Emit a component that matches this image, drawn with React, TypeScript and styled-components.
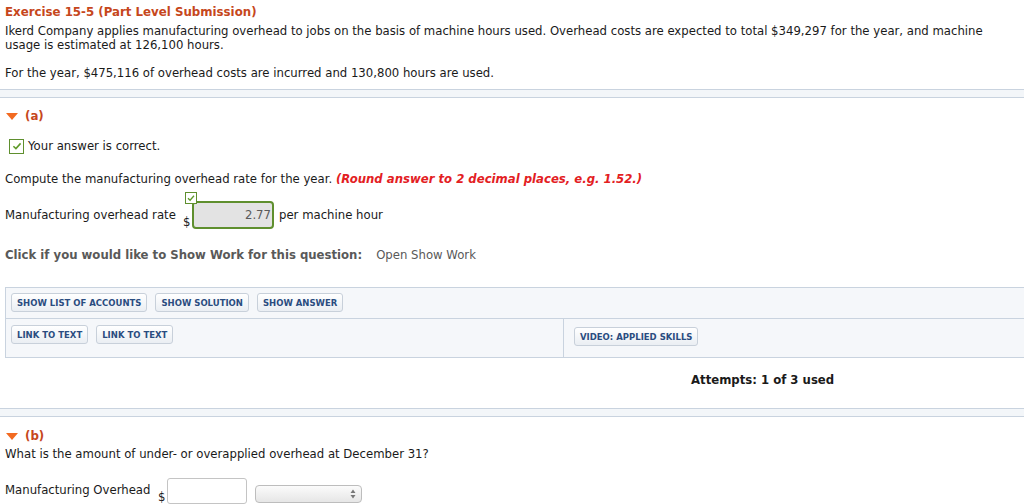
import React from 'react'
import styled, { createGlobalStyle } from 'styled-components'

const GlobalStyle = createGlobalStyle`
  html, body {
    margin: 0;
    padding: 0;
    background: #fff;
  }
  body {
    font-family: "DejaVu Sans", Verdana, sans-serif;
    font-size: 11.7px;
    color: #1a1a1a;
    overflow: hidden;
  }
`

const Page = styled.div`
  width: 1024px;
  height: 504px;
  overflow: hidden;
`

const Section = styled.div`
  padding: 0 5px;
`

const Title = styled.div`
  color: #c6471c;
  font-weight: bold;
  font-size: 11.8px;
  padding-top: 5px;
  height: 14px;
  line-height: 14px;
`

const Paragraph = styled.p<{ gap?: number }>`
  margin: ${({ gap }) => gap ?? 0}px 0 0;
  line-height: 14px;
`

const Band = styled.div<{ top: number }>`
  margin-top: ${({ top }) => top}px;
  height: 7px;
  border-top: 1px solid #c9d3df;
  border-bottom: 1px solid #c9d3df;
  background: #f3f6f9;
`

const PartHeader = styled.div<{ top: number }>`
  display: flex;
  align-items: center;
  gap: 7px;
  margin-top: ${({ top }) => top}px;
  padding-left: 6px;
  height: 16px;
  color: #c6471c;
  font-weight: bold;
  font-size: 11.8px;
`

const Triangle = styled.span`
  width: 0;
  height: 0;
  border-left: 6px solid transparent;
  border-right: 6px solid transparent;
  border-top: 7px solid #f26a21;
`

const CorrectRow = styled.div`
  display: flex;
  align-items: center;
  gap: 4px;
  margin-top: 14px;
  padding-left: 4px;
  height: 16px;
`

const CheckBox = styled.span<{ size: number }>`
  display: inline-flex;
  align-items: center;
  justify-content: center;
  box-sizing: border-box;
  width: ${({ size }) => size}px;
  height: ${({ size }) => size}px;
  border: 1px solid #5f8f2e;
  background: #fff;
`

const Instruction = styled.div`
  margin-top: 18px;
  line-height: 14px;
`

const Hint = styled.span`
  color: #e3201f;
  font-weight: bold;
  font-style: italic;
`

const FieldRow = styled.div<{ top: number }>`
  display: flex;
  align-items: center;
  margin-top: ${({ top }) => top}px;
  height: 28px;
`

const FieldLabel = styled.span<{ width: number }>`
  width: ${({ width }) => width}px;
  flex: none;
`

const Money = styled.span`
  position: relative;
  display: flex;
  align-items: flex-end;
  height: 28px;
`

const Dollar = styled.span`
  width: 9px;
  line-height: 12px;
  margin-bottom: 1px;
`

const Badge = styled(CheckBox)`
  position: absolute;
  left: 2px;
  top: -9px;
`

const AnswerBox = styled.div`
  box-sizing: border-box;
  width: 82px;
  height: 28px;
  border: 2px solid #5f8f2e;
  border-radius: 4px;
  background: #e3e3e3;
  color: #5a5a5a;
  text-align: right;
  padding: 5px 1px 0 0;
`

const Unit = styled.span`
  margin-left: 5px;
`

const ShowWork = styled.div`
  margin-top: 19px;
  color: #595959;
  line-height: 14px;
  display: flex;
  gap: 14px;
`

const Strong = styled.span`
  font-weight: bold;
`

const Toolbar = styled.div`
  margin: 25px 0 0 5px;
  border: 1px solid #c9d3df;
  border-right: none;
  background: #f5f7fa;
`

const ToolRow = styled.div<{ split?: boolean }>`
  display: grid;
  grid-template-columns: ${({ split }) => (split ? '557px 1fr' : '1fr')};
  border-top: ${({ split }) => (split ? '1px solid #c9d3df' : 'none')};
`

const ToolCell = styled.div<{ pad: string; divider?: boolean }>`
  display: flex;
  gap: 8px;
  padding: ${({ pad }) => pad};
  height: ${({ divider }) => (divider === undefined ? 30 : 38)}px;
  box-sizing: border-box;
  border-left: ${({ divider }) => (divider ? '1px solid #c9d3df' : 'none')};
`

const ToolButton = styled.button`
  box-sizing: border-box;
  height: 19px;
  padding: 0 5px;
  border: 1px solid #c8d0da;
  border-radius: 3px;
  background: linear-gradient(#ffffff, #eaeef3);
  color: #2a4c80;
  font-family: "DejaVu Sans", Verdana, sans-serif;
  font-size: 8.5px;
  font-weight: bold;
  cursor: pointer;
`

const Attempts = styled.div`
  margin: 15px 0 0 691px;
  font-weight: bold;
  line-height: 14px;
`

const Question = styled.div`
  margin-top: 3px;
  line-height: 14px;
`

const EmptyInput = styled.div`
  box-sizing: border-box;
  width: 80px;
  height: 26px;
  border: 1px solid #c4c4c4;
  border-radius: 3px;
  background: #fff;
`

const Select = styled.div`
  display: flex;
  align-items: center;
  justify-content: flex-end;
  box-sizing: border-box;
  width: 107px;
  height: 18px;
  margin-left: 8px;
  margin-top: 8px;
  padding-right: 5px;
  border: 1px solid #bdbdbd;
  border-radius: 4px;
  background: linear-gradient(#fbfbfb, #e6e6e6);
`

function Tick({ size }: { size: number }) {
  return (
    <svg width={size} height={size} viewBox="0 0 10 10">
      <path d="M2 5.2 L4.1 7.2 L8 2.8" fill="none" stroke="#5f9a2a" strokeWidth="1.3" />
    </svg>
  )
}

function Arrows() {
  return (
    <svg width="6" height="10" viewBox="0 0 6 10">
      <path d="M3 0.5 L5.5 4 H0.5 Z M3 9.5 L5.5 6 H0.5 Z" fill="#777" />
    </svg>
  )
}

export default function App() {
  return (
    <Page>
      <GlobalStyle />
      <Section>
        <Title>Exercise 15-5 (Part Level Submission)</Title>
        <Paragraph gap={5}>
          Ikerd Company applies manufacturing overhead to jobs on the basis of machine hours used. Overhead costs are expected to total $349,297 for the year, and machine
          <br />
          usage is estimated at 126,100 hours.
        </Paragraph>
        <Paragraph gap={14}>
          For the year, $475,116 of overhead costs are incurred and 130,800 hours are used.
        </Paragraph>
      </Section>
      <Band top={9} />
      <PartHeader top={10}>
        <Triangle />
        (a)
      </PartHeader>
      <Section>
        <CorrectRow>
          <CheckBox size={15}>
            <Tick size={12} />
          </CheckBox>
          Your answer is correct.
        </CorrectRow>
        <Instruction>
          Compute the manufacturing overhead rate for the year. <Hint>(Round answer to 2 decimal places, e.g. 1.52.)</Hint>
        </Instruction>
        <FieldRow top={15}>
          <FieldLabel width={178}>Manufacturing overhead rate</FieldLabel>
          <Money>
            <Badge size={12}>
              <Tick size={10} />
            </Badge>
            <Dollar>$</Dollar>
            <AnswerBox>2.77</AnswerBox>
          </Money>
          <Unit>per machine hour</Unit>
        </FieldRow>
        <ShowWork>
          <Strong>Click if you would like to Show Work for this question:</Strong>
          <span>Open Show Work</span>
        </ShowWork>
      </Section>
      <Toolbar>
        <ToolRow>
          <ToolCell pad="5px 5px">
            <ToolButton>SHOW LIST OF ACCOUNTS</ToolButton>
            <ToolButton>SHOW SOLUTION</ToolButton>
            <ToolButton>SHOW ANSWER</ToolButton>
          </ToolCell>
        </ToolRow>
        <ToolRow split>
          <ToolCell pad="6px 5px" divider={false}>
            <ToolButton>LINK TO TEXT</ToolButton>
            <ToolButton>LINK TO TEXT</ToolButton>
          </ToolCell>
          <ToolCell pad="8px 10px" divider>
            <ToolButton>VIDEO: APPLIED SKILLS</ToolButton>
          </ToolCell>
        </ToolRow>
      </Toolbar>
      <Attempts>Attempts: 1 of 3 used</Attempts>
      <Band top={21} />
      <PartHeader top={11}>
        <Triangle />
        (b)
      </PartHeader>
      <Section>
        <Question>What is the amount of under- or overapplied overhead at December 31?</Question>
        <FieldRow top={15}>
          <FieldLabel width={153}>Manufacturing Overhead</FieldLabel>
          <Money>
            <Dollar>$</Dollar>
            <EmptyInput />
          </Money>
          <Select>
            <Arrows />
          </Select>
        </FieldRow>
      </Section>
    </Page>
  )
}
